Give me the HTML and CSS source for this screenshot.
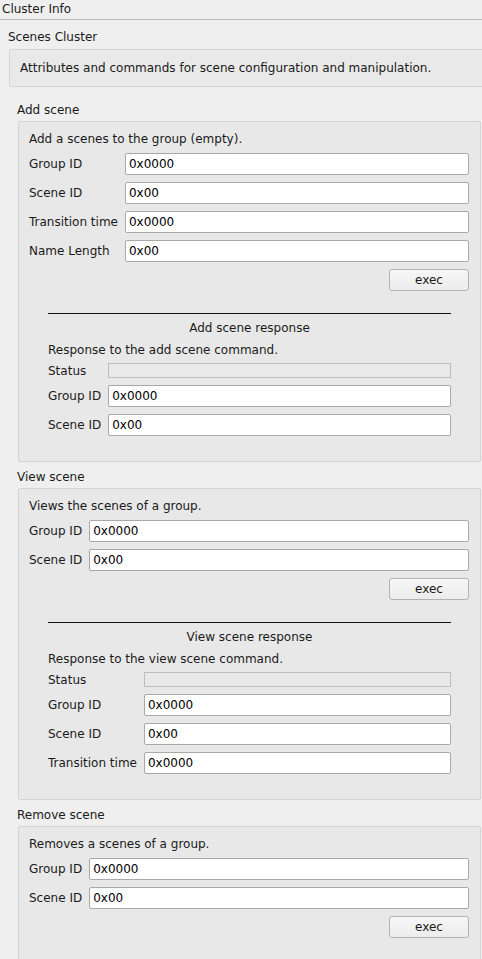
FILE: index.html
```html
<!DOCTYPE html>
<html>
<head>
<meta charset="utf-8">
<link rel="stylesheet" href="styles.css">
</head>
<body>
<div class="header">Cluster Info</div>
<div class="cluster-title">Scenes Cluster</div>
<div class="cluster-desc">Attributes and commands for scene configuration and manipulation.</div>

<div class="group-title">Add scene</div>
<div class="group-box">
  <div class="desc">Add a scenes to the group (empty).</div>
  <div class="form">
    <span class="lbl">Group ID</span><div class="field">0x0000</div>
    <span class="lbl">Scene ID</span><div class="field">0x00</div>
    <span class="lbl">Transition time</span><div class="field">0x0000</div>
    <span class="lbl">Name Length</span><div class="field">0x00</div>
  </div>
  <div class="actions"><button class="btn">exec</button></div>
  <div class="response">
    <div class="sep"></div>
    <div class="resp-title">Add scene response</div>
    <div class="resp-desc">Response to the add scene command.</div>
    <div class="form">
      <span class="lbl">Status</span><div class="status"></div>
      <span class="lbl">Group ID</span><div class="field">0x0000</div>
      <span class="lbl">Scene ID</span><div class="field">0x00</div>
    </div>
  </div>
</div>

<div class="group-title">View scene</div>
<div class="group-box">
  <div class="desc">Views the scenes of a group.</div>
  <div class="form">
    <span class="lbl">Group ID</span><div class="field">0x0000</div>
    <span class="lbl">Scene ID</span><div class="field">0x00</div>
  </div>
  <div class="actions"><button class="btn">exec</button></div>
  <div class="response">
    <div class="sep"></div>
    <div class="resp-title">View scene response</div>
    <div class="resp-desc">Response to the view scene command.</div>
    <div class="form">
      <span class="lbl">Status</span><div class="status"></div>
      <span class="lbl">Group ID</span><div class="field">0x0000</div>
      <span class="lbl">Scene ID</span><div class="field">0x00</div>
      <span class="lbl">Transition time</span><div class="field">0x0000</div>
    </div>
  </div>
</div>

<div class="group-title">Remove scene</div>
<div class="group-box">
  <div class="desc">Removes a scenes of a group.</div>
  <div class="form">
    <span class="lbl">Group ID</span><div class="field">0x0000</div>
    <span class="lbl">Scene ID</span><div class="field">0x00</div>
  </div>
  <div class="actions"><button class="btn">exec</button></div>
</div>
</body>
</html>
```

FILE: styles.css
```css
html, body {
  margin: 0;
  padding: 0;
  background: #efefef;
  overflow: hidden;
}
body {
  font-family: "DejaVu Sans", "Liberation Sans", sans-serif;
  font-size: 12px;
  line-height: 14px;
  color: #1a1a1a;
  width: 482px;
  height: 959px;
}
.header {
  height: 19px;
  line-height: 18px;
  padding-left: 2px;
  border-bottom: 1px solid #b9b9b9;
}
.cluster-title {
  margin: 10px 0 0 8px;
}
.cluster-desc {
  margin: 5px -6px 0 9px;
  padding: 11px 10px 11px 10px;
  background: #e9e9e9;
  border: 1px solid #d6d6d6;
  border-radius: 2px;
}
.group-title {
  margin: 16px 0 0 17px;
}
.group-box + .group-title {
  margin-top: 8px;
}
.group-box {
  margin: 4px 0 0 18px;
  width: 463px;
  box-sizing: border-box;
  background: #e8e8e8;
  border: 1px solid #d4d4d4;
  border-radius: 2px;
  padding: 10px 11px 25px 10px;
}
.form {
  display: grid;
  grid-template-columns: auto 1fr;
  column-gap: 7px;
  row-gap: 7px;
  align-items: center;
  margin-top: 7px;
}
.lbl {
  white-space: nowrap;
}
.field {
  height: 22px;
  box-sizing: border-box;
  background: #ffffff;
  border: 1px solid #a9a9a9;
  border-radius: 2px;
  padding: 0 3px;
  line-height: 20px;
  color: #000;
}
.status {
  height: 15px;
  box-sizing: border-box;
  background: #e9e9e9;
  border: 1px solid #bdbdbd;
}
.actions {
  display: flex;
  justify-content: flex-end;
  margin-top: 7px;
}
.btn {
  width: 80px;
  height: 22px;
  box-sizing: border-box;
  font-family: inherit;
  font-size: 12px;
  color: #1a1a1a;
  background: linear-gradient(#f7f7f7, #ececec);
  border: 1px solid #b3b3b3;
  border-radius: 3px;
  padding: 0;
}
.response {
  margin: 22px 18px 0 19px;
}
.sep {
  height: 1px;
  background: #111;
}
.resp-title {
  text-align: center;
  margin-top: 7px;
}
.resp-desc {
  margin-top: 8px;
}
.response .form {
  margin-top: 6px;
}
```
